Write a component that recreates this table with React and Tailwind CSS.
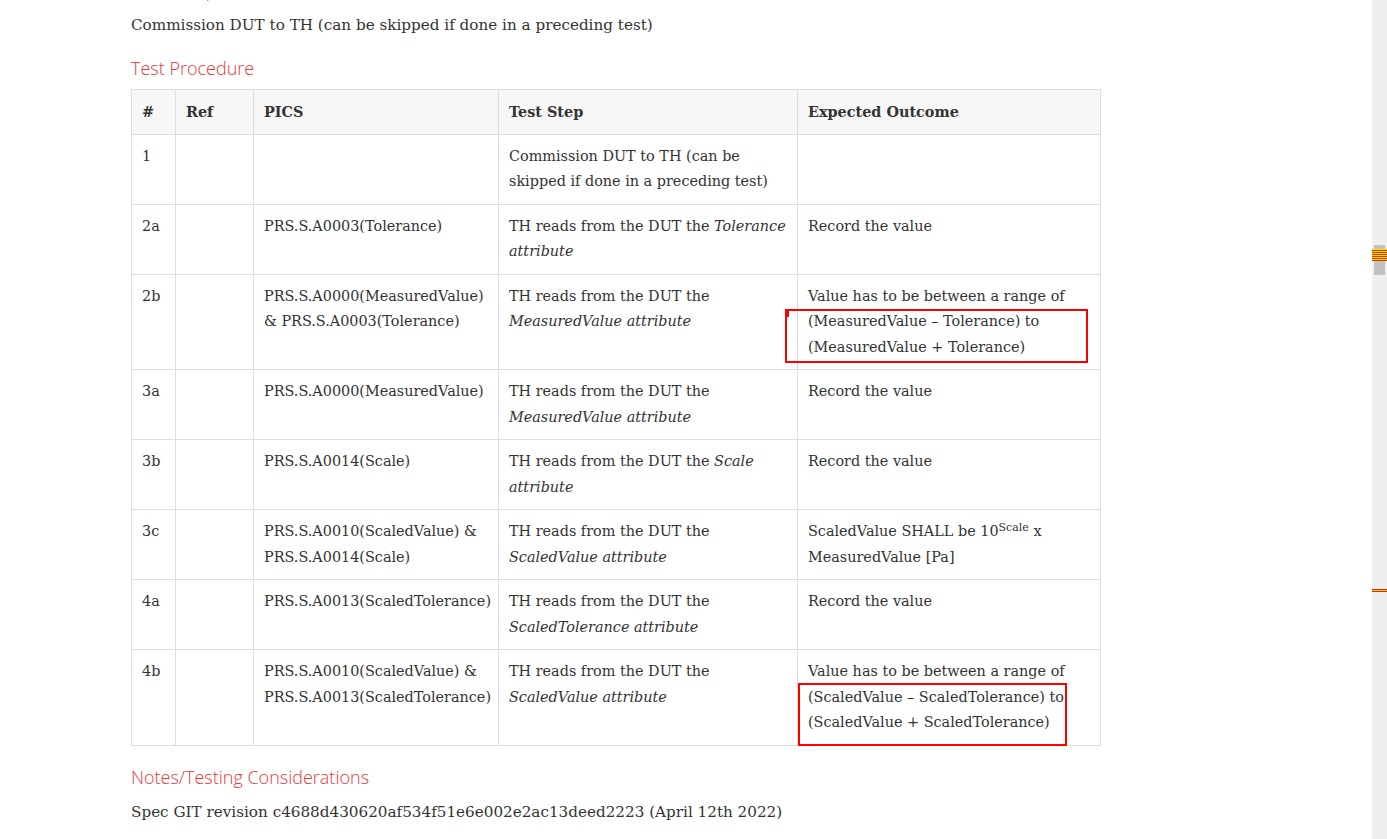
const rows = [
  {
    n: '1',
    pics: [],
    step: <>Commission DUT to TH (can be skipped if done in a preceding test)</>,
    outcome: null,
  },
  {
    n: '2a',
    pics: ['PRS.S.A0003(Tolerance)'],
    step: <>TH reads from the DUT the <em>Tolerance attribute</em></>,
    outcome: <>Record the value</>,
  },
  {
    n: '2b',
    pics: ['PRS.S.A0000(MeasuredValue)', '& PRS.S.A0003(Tolerance)'],
    step: <>TH reads from the DUT the <em>MeasuredValue attribute</em></>,
    outcome: (
      <>
        Value has to be between a range of (MeasuredValue – Tolerance) to (MeasuredValue + Tolerance)
        <span className="absolute left-[-13px] top-[34px] w-[303px] h-[54px] border-2 border-[#ff0000]" />
        <span className="absolute left-[-13px] top-[35px] w-[4px] h-[7px] bg-[#ff0000]" />
      </>
    ),
  },
  {
    n: '3a',
    pics: ['PRS.S.A0000(MeasuredValue)'],
    step: <>TH reads from the DUT the <em>MeasuredValue attribute</em></>,
    outcome: <>Record the value</>,
  },
  {
    n: '3b',
    pics: ['PRS.S.A0014(Scale)'],
    step: <>TH reads from the DUT the <em>Scale attribute</em></>,
    outcome: <>Record the value</>,
  },
  {
    n: '3c',
    pics: ['PRS.S.A0010(ScaledValue) &', 'PRS.S.A0014(Scale)'],
    step: <>TH reads from the DUT the <em>ScaledValue attribute</em></>,
    outcome: (
      <>
        ScaledValue SHALL be 10<sup className="text-[11px]">Scale</sup> x MeasuredValue [Pa]
      </>
    ),
  },
  {
    n: '4a',
    pics: ['PRS.S.A0013(ScaledTolerance)'],
    step: <>TH reads from the DUT the <em>ScaledTolerance attribute</em></>,
    outcome: <>Record the value</>,
  },
  {
    n: '4b',
    pics: ['PRS.S.A0010(ScaledValue) &', 'PRS.S.A0013(ScaledTolerance)'],
    step: <>TH reads from the DUT the <em>ScaledValue attribute</em></>,
    outcome: (
      <>
        Value has to be between a range of (ScaledValue – ScaledTolerance) to (ScaledValue + ScaledTolerance)
        <span className="absolute left-[0px] top-[33px] w-[269px] h-[63px] border-2 border-[#ff0000]" />
      </>
    ),
  },
]

const cell = 'border border-[#dddddd] px-[10px] pt-[9px] pb-[9px] align-top text-left'

export default function App() {
  return (
    <div className="flex h-[839px] overflow-hidden bg-white">
      <main className="flex-1 pl-[131px] font-['DejaVu_Serif',serif] text-[15.2px] leading-[25px] text-[#333333]">
        <h3 className="mt-[-22px] font-['Open_Sans',sans-serif] font-light text-[18px] leading-[25px] text-[#e8363b]">
          Test Setup
        </h3>
        <p className="mt-[10px]">Commission DUT to TH (can be skipped if done in a preceding test)</p>
        <h3 className="mt-[18px] font-['Open_Sans',sans-serif] font-light text-[18px] leading-[25px] text-[#e8363b]">
          Test Procedure
        </h3>
        <table className="mt-[8px] w-[970px] table-fixed border-collapse text-[14.4px] leading-[25.5px]">
          <colgroup>
            <col className="w-[44px]" />
            <col className="w-[78px]" />
            <col className="w-[245px]" />
            <col className="w-[299px]" />
            <col className="w-[303px]" />
          </colgroup>
          <thead>
            <tr className="bg-[#f7f7f7]">
              <th className={cell + ' font-bold'}>#</th>
              <th className={cell + ' font-bold'}>Ref</th>
              <th className={cell + ' font-bold'}>PICS</th>
              <th className={cell + ' font-bold'}>Test Step</th>
              <th className={cell + ' font-bold'}>Expected Outcome</th>
            </tr>
          </thead>
          <tbody>
            {rows.map((r) => (
              <tr key={r.n}>
                <td className={cell}>{r.n}</td>
                <td className={cell}></td>
                <td className={cell}>
                  {r.pics.map((p) => (
                    <div key={p}>{p}</div>
                  ))}
                </td>
                <td className={cell}>{r.step}</td>
                <td className={cell + ' relative'}>{r.outcome}</td>
              </tr>
            ))}
          </tbody>
        </table>
        <h3 className="mt-[19px] font-['Open_Sans',sans-serif] font-light text-[18px] leading-[25px] text-[#e8363b]">
          Notes/Testing Considerations
        </h3>
        <p className="mt-[10px]">Spec GIT revision c4688d430620af534f51e6e002e2ac13deed2223 (April 12th 2022)</p>
      </main>
      <div className="relative w-[15px] h-[839px] bg-[#efefef]">
        <div className="absolute left-[2px] top-[245px] w-[11px] h-[30px] bg-[#c1c1c1]" />
        <div className="absolute left-0 top-[249px] w-[15px] flex flex-col">
          {[0, 1, 2, 3, 4, 5].map((i) => (
            <div key={i} className="flex flex-col">
              <div className="h-[1px] bg-[#ffd800]" />
              <div className="h-[1px] bg-[#c84000]" />
            </div>
          ))}
        </div>
        <div className="absolute left-0 top-[589px] w-[15px] flex flex-col">
          <div className="h-[1px] bg-[#d23000]" />
          <div className="h-[1px] bg-[#ffd800]" />
          <div className="h-[1px] bg-[#d23000]" />
        </div>
      </div>
    </div>
  )
}
